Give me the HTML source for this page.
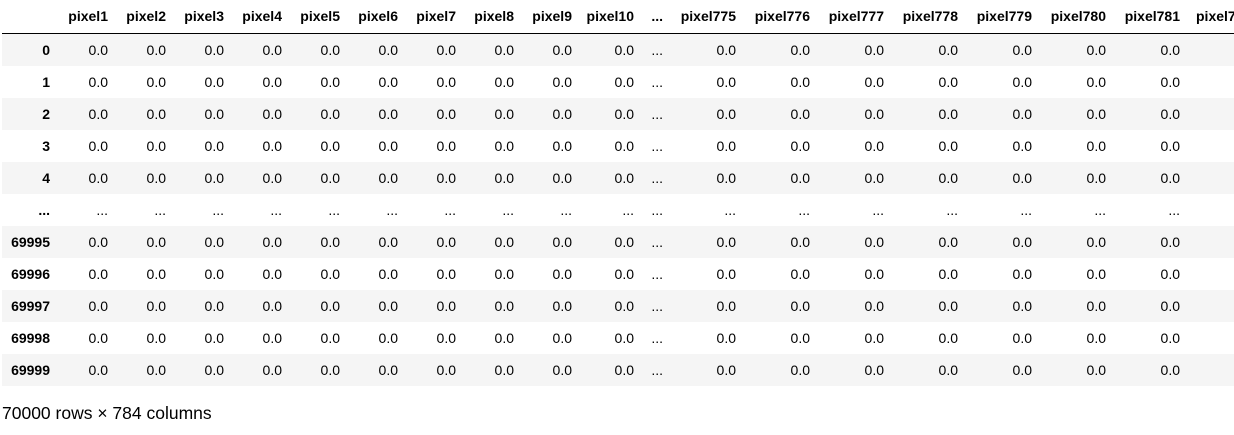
<!DOCTYPE html>
<html><head><meta charset="utf-8"><style>
html,body{margin:0;padding:0;background:#fff;width:1234px;height:435px;overflow:hidden}
.wrap{position:absolute;left:2px;top:0;width:1232px;overflow:hidden}
table{border-collapse:collapse;table-layout:fixed;width:1259px;font-family:"Liberation Sans",Arial,sans-serif;font-size:14px;color:#000}
th,td{padding:0 7px;text-align:right;white-space:nowrap;overflow:hidden}
thead th{height:33px;border-bottom:1px solid #000;font-weight:bold;box-sizing:border-box;vertical-align:middle}
tbody td,tbody th{height:32px;vertical-align:middle}
tbody th{font-weight:bold}
tbody tr:nth-child(odd){background:#f5f5f5}
.foot{position:absolute;left:2px;top:403px;font-family:"Liberation Sans",Arial,sans-serif;font-size:17.5px;color:#000}
</style></head><body>
<div class="wrap">
<table>
<colgroup><col style="width:55px"><col style="width:58px"><col style="width:58px"><col style="width:58px"><col style="width:58px"><col style="width:58px"><col style="width:58px"><col style="width:58px"><col style="width:58px"><col style="width:58px"><col style="width:62px"><col style="width:29px"><col style="width:73px"><col style="width:74px"><col style="width:74px"><col style="width:74px"><col style="width:74px"><col style="width:74px"><col style="width:74px"><col style="width:74px"></colgroup>
<thead><tr><th></th><th>pixel1</th><th>pixel2</th><th>pixel3</th><th>pixel4</th><th>pixel5</th><th>pixel6</th><th>pixel7</th><th>pixel8</th><th>pixel9</th><th>pixel10</th><th>...</th><th>pixel775</th><th>pixel776</th><th>pixel777</th><th>pixel778</th><th>pixel779</th><th>pixel780</th><th>pixel781</th><th style="text-align:left;padding-left:9px">pixel782</th></tr></thead>
<tbody id="b"></tbody>
</table>
</div>
<div class="foot">70000 rows × 784 columns</div>
<script>
var idx=["0","1","2","3","4","...","69995","69996","69997","69998","69999"],h="";
idx.forEach(function(i){var v=i==="..."?"...":"0.0";h+="<tr><th>"+i+"</th>";for(var k=0;k<10;k++)h+="<td>"+v+"</td>";h+="<td>...</td>";for(var k=0;k<7;k++)h+="<td>"+v+"</td>";h+="<td></td></tr>";});
document.getElementById("b").innerHTML=h;
</script>
</body></html>
